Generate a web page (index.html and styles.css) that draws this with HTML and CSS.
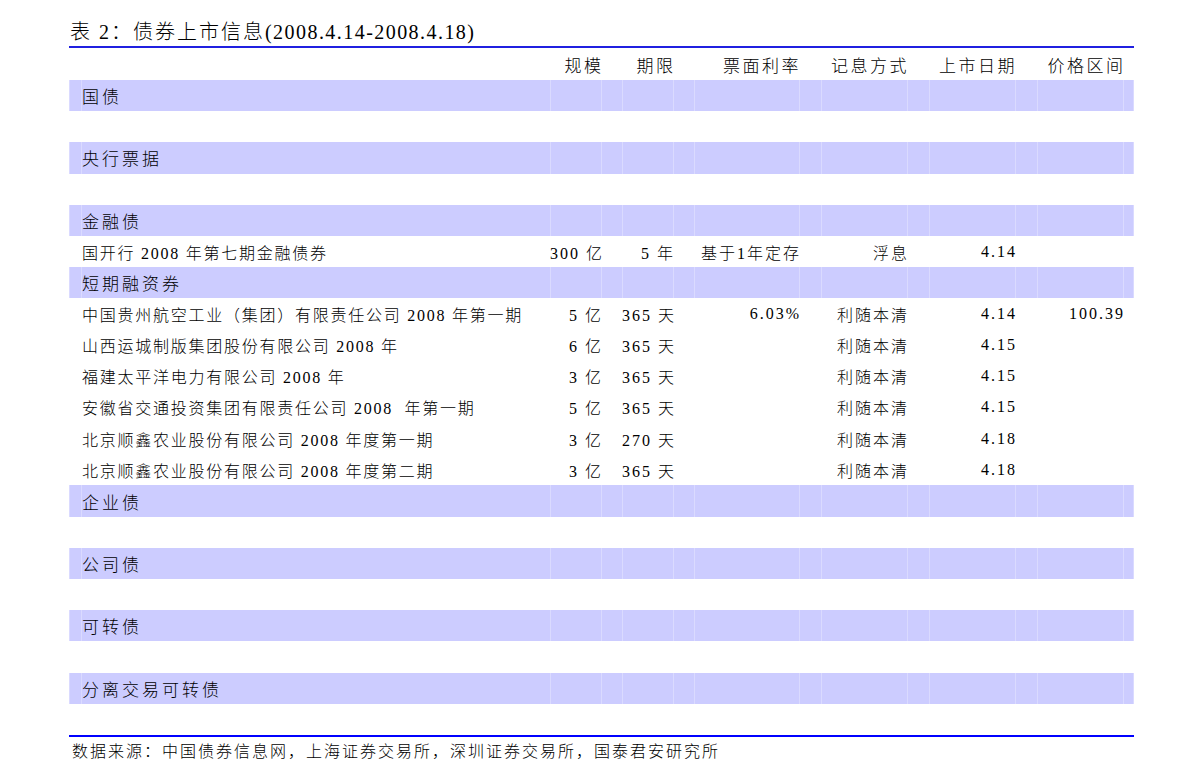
FILE: index.html
```html
<!DOCTYPE html>
<html lang="zh-CN">
<head>
<meta charset="utf-8">
<title>债券上市信息</title>
<link rel="stylesheet" href="styles.css">
</head>
<body>
<div class="sheet">
  <div class="title">表 2：债券上市信息<span class="latin">(2008.4.14-2008.4.18)</span></div>

  <div class="row head">
    <div class="name"></div>
    <div>规模</div>
    <div>期限</div>
    <div>票面利率</div>
    <div>记息方式</div>
    <div>上市日期</div>
    <div class="last">价格区间</div>
  </div>

  <div class="row band"><div class="name">国债</div></div>
  <div class="row"></div>
  <div class="row band"><div class="name">央行票据</div></div>
  <div class="row"></div>
  <div class="row band"><div class="name">金融债</div></div>
  <div class="row">
    <div class="name">国开行 2008 年第七期金融债券</div>
    <div>300 亿</div>
    <div>5 年</div>
    <div>基于1年定存</div>
    <div>浮息</div>
    <div>4.14</div>
    <div class="last"></div>
  </div>
  <div class="row band"><div class="name">短期融资券</div></div>
  <div class="row">
    <div class="name">中国贵州航空工业（集团）有限责任公司 2008 年第一期</div>
    <div>5 亿</div>
    <div>365 天</div>
    <div>6.03%</div>
    <div>利随本清</div>
    <div>4.14</div>
    <div class="last">100.39</div>
  </div>
  <div class="row">
    <div class="name">山西运城制版集团股份有限公司 2008 年</div>
    <div>6 亿</div>
    <div>365 天</div>
    <div></div>
    <div>利随本清</div>
    <div>4.15</div>
    <div class="last"></div>
  </div>
  <div class="row">
    <div class="name">福建太平洋电力有限公司 2008 年</div>
    <div>3 亿</div>
    <div>365 天</div>
    <div></div>
    <div>利随本清</div>
    <div>4.15</div>
    <div class="last"></div>
  </div>
  <div class="row">
    <div class="name">安徽省交通投资集团有限责任公司 2008&nbsp; 年第一期</div>
    <div>5 亿</div>
    <div>365 天</div>
    <div></div>
    <div>利随本清</div>
    <div>4.15</div>
    <div class="last"></div>
  </div>
  <div class="row">
    <div class="name">北京顺鑫农业股份有限公司 2008 年度第一期</div>
    <div>3 亿</div>
    <div>270 天</div>
    <div></div>
    <div>利随本清</div>
    <div>4.18</div>
    <div class="last"></div>
  </div>
  <div class="row">
    <div class="name">北京顺鑫农业股份有限公司 2008 年度第二期</div>
    <div>3 亿</div>
    <div>365 天</div>
    <div></div>
    <div>利随本清</div>
    <div>4.18</div>
    <div class="last"></div>
  </div>
  <div class="row band"><div class="name">企业债</div></div>
  <div class="row"></div>
  <div class="row band"><div class="name">公司债</div></div>
  <div class="row"></div>
  <div class="row band"><div class="name">可转债</div></div>
  <div class="row"></div>
  <div class="row band"><div class="name">分离交易可转债</div></div>
  <div class="row"></div>

  <div class="source">数据来源：中国债券信息网，上海证券交易所，深圳证券交易所，国泰君安研究所</div>
</div>
</body>
</html>
```

FILE: styles.css
```css
html, body {
  margin: 0;
  background: #ffffff;
}

body {
  padding: 0 0 0 69px;
  font-family: "Liberation Serif", "Noto Sans CJK SC", serif;
  font-weight: 300;
  color: #000000;
}

.sheet {
  width: 1065px;
}

.title {
  font-size: 20px;
  line-height: 24px;
  letter-spacing: 2px;
  padding: 20px 0 2px 1px;
  border-bottom: 2px solid #2020e0;
  white-space: nowrap;
}

.title .latin {
  letter-spacing: 1.45px;
}

.row {
  display: grid;
  grid-template-columns: 481px 72px 72px 127px 108px 108px 97px;
  align-items: center;
  height: 31.2px;
  font-size: 16px;
  letter-spacing: 2px;
  white-space: nowrap;
}

.row > div {
  text-align: right;
  padding-right: 19px;
}

.row > div:nth-child(4),
.row > div:nth-child(5),
.row > div:nth-child(6) {
  padding-right: 20px;
}

.row > .last {
  padding-right: 9px;
}

.row > .name {
  text-align: left;
  padding: 0 0 0 13px;
  letter-spacing: 1.75px;
}

.head {
  height: 32px;
  font-size: 17px;
  letter-spacing: 2.5px;
}

.head > div {
  padding-right: 18.5px;
}

.head > .last {
  padding-right: 8.5px;
}

.band {
  --ln: linear-gradient(#dadaff, #dadaff);
  background-color: #ccccff;
  background-image: var(--ln), var(--ln), var(--ln), var(--ln), var(--ln),
    var(--ln), var(--ln), var(--ln), var(--ln), var(--ln),
    var(--ln), var(--ln), var(--ln), var(--ln), var(--ln);
  background-size: 1px 100%;
  background-repeat: no-repeat;
  background-position: 0 0, 12px 0, 481px 0, 532px 0, 553px 0,
    604px 0, 625px 0, 730px 0, 752px 0, 838px 0,
    860px 0, 946px 0, 968px 0, 1054px 0, 1064px 0;
}

.band > .name {
  font-size: 17px;
  letter-spacing: 3px;
}

.source {
  border-top: 2px solid #0000ff;
  padding: 3px 0 0 3px;
  font-size: 16px;
  line-height: 24px;
  letter-spacing: 2px;
  white-space: nowrap;
}
```
